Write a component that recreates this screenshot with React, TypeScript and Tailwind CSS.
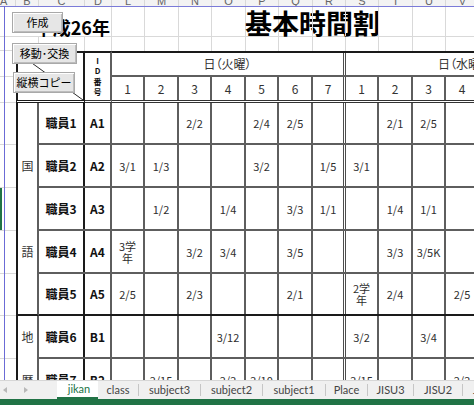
import React from 'react';

// Excel sheet screenshot: 基本時間割 timetable

const JP = "font-['Noto_Sans_CJK_JP',sans-serif]";
const LIGHT = 'border-[#d9d9d9]';

// data column widths (x 112 → 480)
const colW = ['w-[33px]', 'w-[34px]', 'w-[33px]', 'w-[34px]', 'w-[33px]', 'w-[34px]', 'w-[33px]', 'w-[33px]', 'w-[34px]', 'w-[33px]', 'w-[34px]'];
const colLetters = ['L', 'M', 'N', 'O', 'P', 'Q', 'R', 'S', 'T', 'U', 'V'];

const lineCls = (i: number) =>
  i === 6 ? 'border-r-[3px] border-double border-[#4d4d4d]' : 'border-r-2 border-[#5e5e5e]';

type Row = { staff: string; id: string; h: string; cells: string[] };

const groups: { subject: string[]; gap: string; rows: Row[] }[] = [
  {
    subject: ['国', '語'],
    gap: 'gap-[74px]',
    rows: [
      { staff: '職員1', id: 'A1', h: 'h-[42px]', cells: ['', '', '2/2', '', '2/4', '2/5', '', '', '2/1', '2/5', ''] },
      { staff: '職員2', id: 'A2', h: 'h-[43px]', cells: ['3/1', '1/3', '', '', '3/2', '', '1/5', '3/1', '', '', ''] },
      { staff: '職員3', id: 'A3', h: 'h-[43px]', cells: ['', '1/2', '', '1/4', '', '3/3', '1/1', '', '1/4', '1/1', ''] },
      { staff: '職員4', id: 'A4', h: 'h-[43px]', cells: ['3学\n年', '', '3/2', '3/4', '', '3/5', '', '', '3/3', '3/5K', ''] },
      { staff: '職員5', id: 'A5', h: 'h-[42px]', cells: ['2/5', '', '2/3', '', '', '2/1', '', '2学\n年', '2/4', '', '2/5'] },
    ],
  },
  {
    subject: ['地', '歴'],
    gap: 'gap-[31px]',
    rows: [
      { staff: '職員6', id: 'B1', h: 'h-[43px]', cells: ['', '', '', '3/12', '', '', '', '3/2', '', '3/4', ''] },
      { staff: '職員7', id: 'B2', h: 'h-[43px]', cells: ['', '2/15', '', '2/2', '2/10', '', '', '2/15', '', '', '2/2'] },
    ],
  },
];

// left margin cells (column A/B gridlines), heights from y=7
const marginRows = ['h-[30px]', 'h-[14px]', 'h-[26px]', 'h-[26px]', 'h-[42px]', 'h-[43px]', 'h-[43px]', 'h-[43px]', 'h-[42px]', 'h-[43px]', 'h-[43px]'];

const tabs = [
  { name: 'class', w: 'w-[40px]' },
  { name: 'subject3', w: 'w-[61px]' },
  { name: 'subject2', w: 'w-[61px]' },
  { name: 'subject1', w: 'w-[62px]' },
  { name: 'Place', w: 'w-[41px]' },
  { name: 'JISU3', w: 'w-[45px]' },
  { name: 'JISU2', w: 'w-[48px]' },
  { name: 'JISU1', w: 'w-[48px]' },
];

const btn =
  'absolute flex items-center justify-center bg-[#e6e6e6] border border-[#a9a9a9] shadow-[inset_1px_1px_0_#ffffff,inset_-1px_-1px_0_#bdbdbd] text-[11px] text-black leading-none';

function DataRow({ row, last }: { row: Row; last: boolean }) {
  return (
    <div className={`flex shrink-0 ${row.h} border-b-2 ${last ? 'border-[#1a1a1a]' : 'border-[#5e5e5e]'}`}>
      <div className="w-[46px] shrink-0 border-r-2 border-[#1a1a1a] flex items-center justify-center font-bold text-[12px] text-[#111]">
        {row.staff}
      </div>
      <div className="w-[27px] shrink-0 border-r-2 border-[#5e5e5e] flex items-center justify-center font-bold text-[12px] text-[#111]">
        {row.id}
      </div>
      {row.cells.map((c, i) => (
        <div
          key={i}
          className={`${colW[i]} shrink-0 ${lineCls(i)} flex items-center justify-center text-center text-[11px] leading-[12px] text-[#2e2e2e] whitespace-pre-line`}
        >
          {c}
        </div>
      ))}
    </div>
  );
}

const App = () => {
  return (
    <div className={`w-[474px] h-[405px] flex flex-col overflow-hidden bg-white ${JP}`}>
      {/* sheet */}
      <div className="relative flex-1 min-h-0 overflow-hidden">
        {/* column letters strip */}
        <div className="flex h-[7px] overflow-hidden bg-[#f3f3f3] border-b border-[#7b7bd8] font-['Liberation_Sans',sans-serif] text-[11px] leading-none text-[#666]">
          <div className={`w-[16px] shrink-0 border-r ${LIGHT}`}><span className="block -mt-[4px]">A</span></div>
          <div className={`w-[23px] shrink-0 border-r ${LIGHT} text-center`}><span className="block -mt-[4px]">B</span></div>
          <div className={`w-[46px] shrink-0 border-r ${LIGHT} text-center`}><span className="block -mt-[4px]">C</span></div>
          <div className={`w-[27px] shrink-0 border-r ${LIGHT} text-center`}><span className="block -mt-[4px]">D</span></div>
          {colLetters.map((l, i) => (
            <div key={l} className={`${colW[i]} shrink-0 border-r ${LIGHT} text-center`}>
              <span className="block -mt-[4px]">{l}</span>
            </div>
          ))}
        </div>

        <div className="flex">
          {/* left margin */}
          <div className="w-[16px] shrink-0 flex flex-col">
            {marginRows.map((h, i) => (
              <div key={i} className={`${h} shrink-0 border-b ${LIGHT} flex`}>
                {i === 6 && <div className="w-[2px] h-full bg-[#217346]" />}
              </div>
            ))}
          </div>

          <div className="flex-1 min-w-0 flex flex-col">
            {/* title row */}
            <div className={`flex h-[30px] shrink-0 border-b ${LIGHT}`}>
              <div className={`w-[96px] shrink-0 border-r ${LIGHT} flex items-end justify-end pr-[1px] text-[18px] font-bold leading-none text-black whitespace-nowrap`}>
                平成26年
              </div>
              {colW.map((w, i) => (
                <div key={i} className={`${w} shrink-0 border-r ${LIGHT} flex items-end`}>
                  {i === 4 && (
                    <span className="-ml-[1px] text-[27px] font-bold leading-none text-black whitespace-nowrap">基本時間割</span>
                  )}
                </div>
              ))}
            </div>

            {/* spacer row */}
            <div className="flex h-[14px] shrink-0">
              <div className={`w-[23px] shrink-0 border-r ${LIGHT}`} />
              <div className={`w-[46px] shrink-0 border-r ${LIGHT}`} />
              <div className={`w-[27px] shrink-0 border-r ${LIGHT}`} />
              {colW.map((w, i) => (
                <div key={i} className={`${w} shrink-0 border-r ${LIGHT}`} />
              ))}
            </div>

            {/* table header */}
            <div className="flex h-[52px] shrink-0">
              <div className="w-[69px] shrink-0 border-t-2 border-l-2 border-r-2 border-b-[3px] border-[#1a1a1a] [border-bottom-style:double]">
                <svg className="block w-full h-full" viewBox="0 0 100 100" preserveAspectRatio="none">
                  <line x1="0" y1="0" x2="100" y2="100" stroke="#2a2a2a" strokeWidth="1" vectorEffect="non-scaling-stroke" />
                </svg>
              </div>
              <div className="w-[27px] shrink-0 border-t-2 border-r-2 border-b-[3px] border-[#5e5e5e] border-t-[#1a1a1a] border-b-[#333] [border-bottom-style:double] flex flex-col items-center justify-center text-[8px] font-bold leading-[10.5px] text-[#111]">
                <span>I</span>
                <span>D</span>
                <span>番</span>
                <span>号</span>
              </div>
              <div className="flex-1 min-w-0 flex flex-col">
                <div className="flex h-[26px] shrink-0 border-t-2 border-b-2 border-t-[#1a1a1a] border-b-[#5e5e5e] text-[12px] text-[#333] [font-feature-settings:'palt']">
                  <div className="w-[234px] shrink-0 border-r-[3px] border-double border-[#4d4d4d] flex items-center justify-center">
                    日（火曜）
                  </div>
                  <div className="w-[232px] shrink-0 flex items-center justify-center whitespace-nowrap">日（水曜）</div>
                </div>
                <div className="flex h-[26px] shrink-0 border-b-[3px] border-double border-[#333] text-[12px] text-[#333]">
                  {['1', '2', '3', '4', '5', '6', '7', '1', '2', '3', '4'].map((n, i) => (
                    <div key={i} className={`${colW[i]} shrink-0 ${lineCls(i)} flex items-center justify-center`}>
                      {n}
                    </div>
                  ))}
                </div>
              </div>
            </div>

            {/* body */}
            {groups.map((g, gi) => (
              <div key={gi} className="flex shrink-0">
                <div
                  className={`w-[23px] shrink-0 border-l-2 border-r-2 border-b-2 border-[#5e5e5e] border-l-[#1a1a1a] border-b-[#1a1a1a] flex flex-col items-center justify-center ${g.gap} text-[12px] leading-none text-[#333]`}
                >
                  {g.subject.map((s) => (
                    <span key={s}>{s}</span>
                  ))}
                </div>
                <div className="flex-1 min-w-0 flex flex-col">
                  {g.rows.map((r, ri) => (
                    <DataRow key={r.id} row={r} last={ri === g.rows.length - 1} />
                  ))}
                </div>
              </div>
            ))}
          </div>
        </div>

        {/* page break line */}
        <div className="absolute left-[4px] top-[6px] bottom-0 w-px bg-[#6b6bd6]" />

        {/* form buttons */}
        <div className={`${btn} left-[12px] top-[12px] w-[51px] h-[21px]`}>作成</div>
        <div className={`${btn} left-[12px] top-[43px] w-[65px] h-[21px]`}>移動･交換</div>
        <div className={`${btn} left-[13px] top-[72px] w-[62px] h-[21px]`}>縦横コピー</div>
      </div>

      {/* sheet tabs */}
      <div className="h-[19px] shrink-0 flex bg-[#f0f0f0] border-t border-[#d6d6d6] font-['Lato',sans-serif] text-[11px] text-[#444] whitespace-nowrap">
        <div className="w-[57px] shrink-0 flex items-center gap-[17px] pl-[3px]">
          <svg width="4" height="6" viewBox="0 0 4 6">
            <polygon points="4,0 0,3 4,6" fill="#b8b8b8" />
          </svg>
          <svg width="4" height="6" viewBox="0 0 4 6">
            <polygon points="0,0 4,3 0,6" fill="#b8b8b8" />
          </svg>
        </div>
        <div className="w-[41px] shrink-0 bg-white border-b-2 border-[#217346] text-[#217346] flex items-center justify-center pl-[3px]">
          jikan
        </div>
        {tabs.map((t, i) => (
          <React.Fragment key={t.name}>
            {i > 0 && <div className="w-px h-[12px] self-center shrink-0 bg-[#c6c6c6]" />}
            <div className={`${t.w} shrink-0 flex items-center justify-center`}>{t.name}</div>
          </React.Fragment>
        ))}
      </div>
      <div className="h-[6px] shrink-0 bg-[#217346]" />
    </div>
  );
};

export default App;
